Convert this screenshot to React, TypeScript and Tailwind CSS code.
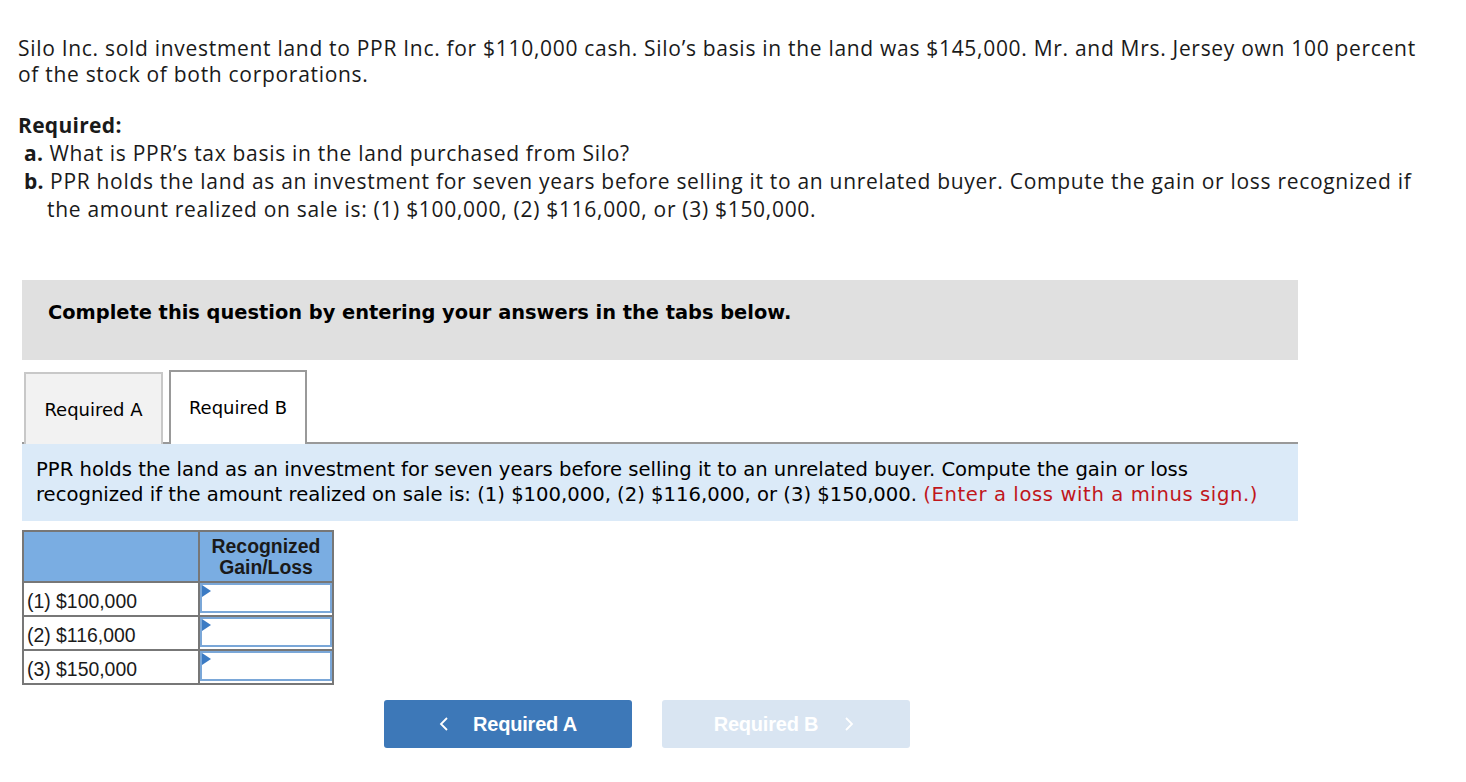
import React from "react";

function Marker() {
  return (
    <span className="absolute left-0 top-0 block w-0 h-0 border-t-[6px] border-b-[6px] border-l-[9px] border-t-transparent border-b-transparent border-l-[#3b7bc4]" />
  );
}

export default function App() {
  const rows = ["(1) $100,000", "(2) $116,000", "(3) $150,000"];
  return (
    <div className="w-[1466px] h-[782px] bg-white text-[#1a1a1a] overflow-hidden">
      <div className="pl-[18px] pt-[35px] font-['Open_Sans',sans-serif] text-[21px] tracking-[0.7px] leading-[26px]">
        <p>
          Silo Inc. sold investment land to PPR Inc. for $110,000 cash. Silo’s basis in the land was $145,000. Mr. and Mrs. Jersey own 100 percent
          <br />
          of the stock of both corporations.
        </p>
        <div className="mt-[24px] leading-[28px]">
          <p className="font-bold tracking-[0.3px]">Required:</p>
          <p className="pl-[6px]">
            <b className="tracking-[0.3px]">a.</b> What is PPR’s tax basis in the land purchased from Silo?
          </p>
          <p className="pl-[6px]">
            <b className="tracking-[0.3px]">b.</b> PPR holds the land as an investment for seven years before selling it to an unrelated buyer. Compute the gain or loss recognized if
          </p>
          <p className="pl-[29px]">the amount realized on sale is: (1) $100,000, (2) $116,000, or (3) $150,000.</p>
        </div>
      </div>

      <div className="ml-[22px] w-[1276px] mt-[57px]">
        <div className="h-[80px] bg-[#e0e0e0] pt-[21px] pl-[26px] font-['DejaVu_Sans',Verdana,sans-serif] font-bold text-[19.4px] leading-[24px] text-black">
          Complete this question by entering your answers in the tabs below.
        </div>

        <div className="mt-[10px] flex items-end gap-[6px] pl-[2px] border-b-2 border-[#999999] h-[74px] font-['DejaVu_Sans',Verdana,sans-serif] text-[18px] text-black">
          <div className="w-[139px] h-[72px] mb-[-2px] bg-[#f2f2f2] border-2 border-b-0 border-[#c8c8c8] flex items-center justify-center">
            Required A
          </div>
          <div className="w-[138px] h-[74px] mb-[-2px] bg-white border-2 border-b-0 border-[#999999] flex items-center justify-center pb-[2px]">
            Required B
          </div>
        </div>

        <div className="bg-[#dbeaf8] px-[14px] pt-[13px] pb-[14px] font-['DejaVu_Sans',Verdana,sans-serif] text-[19.6px] leading-[25px] text-black">
          PPR holds the land as an investment for seven years before selling it to an unrelated buyer. Compute the gain or loss
          <br />
          recognized if the amount realized on sale is: (1) $100,000, (2) $116,000, or (3) $150,000.{" "}
          <span className="text-[#c0161c] tracking-[0.6px]">(Enter a loss with a minus sign.)</span>
        </div>

        <table className="mt-[9px] border-collapse font-['Liberation_Sans',Arial,sans-serif] text-[19.4px] text-[#1a1a1a]">
          <thead>
            <tr className="h-[51px] bg-[#7aade2]">
              <th className="w-[176px] border-2 border-[#777777]" />
              <th className="w-[134px] border-2 border-[#777777] font-bold text-[#1a1a1a] leading-[21px] pt-[1px]">
                Recognized
                <br />
                Gain/Loss
              </th>
            </tr>
          </thead>
          <tbody>
            {rows.map((r) => (
              <tr key={r} className="h-[34px]">
                <td className="border-2 border-[#777777] pl-[3px] pt-[4px] align-middle leading-[24px] whitespace-nowrap">{r}</td>
                <td className="border-2 border-[#777777] p-0 align-top">
                  <div className="relative h-[30px] bg-white border-2 border-[#7aa7d8]">
                    <Marker />
                  </div>
                </td>
              </tr>
            ))}
          </tbody>
        </table>

        <div className="mt-[15px] flex gap-[30px] pl-[362px] font-['Liberation_Sans',Arial,sans-serif] font-bold text-[20px] text-white">
          <button className="w-[248px] h-[48px] rounded-[3px] bg-[#3d78b8] flex items-center justify-center gap-[24px]">
            <svg width="10" height="16" viewBox="0 0 10 16" fill="none" stroke="white" strokeWidth="1.8">
              <path d="M8 2 L2 8 L8 14" />
            </svg>
            <span className="tracking-[-0.2px]">Required A</span>
          </button>
          <button className="w-[248px] h-[48px] rounded-[3px] bg-[#d9e5f2] flex items-center justify-center gap-[26px] pr-[4px]">
            <span className="tracking-[-0.2px]">Required B</span>
            <svg width="10" height="16" viewBox="0 0 10 16" fill="none" stroke="white" strokeWidth="1.8">
              <path d="M2 2 L8 8 L2 14" />
            </svg>
          </button>
        </div>
      </div>
    </div>
  );
}
